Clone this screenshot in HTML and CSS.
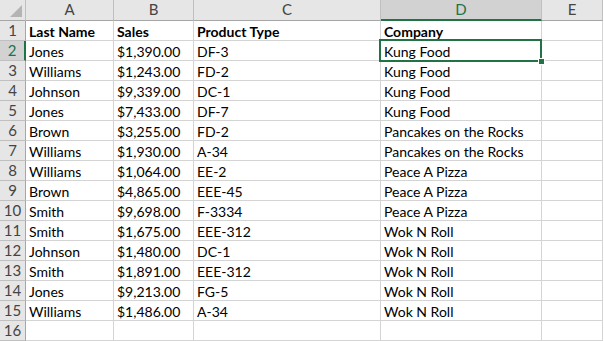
FILE: index.html
```html
<!DOCTYPE html>
<html lang="en">
<head>
    <meta charset="UTF-8">
    <title>Sheet1</title>
    <link rel="stylesheet" href="styles.css">
</head>
<body>
    <div class="sheet">
        <div class="corner"><span class="tri"></span></div>
        <div class="col-head">A</div>
        <div class="col-head">B</div>
        <div class="col-head">C</div>
        <div class="col-head sel">D</div>
        <div class="col-head">E</div>

        <div class="row-head">1</div>
        <div class="cell bold">Last Name</div>
        <div class="cell bold">Sales</div>
        <div class="cell bold">Product Type</div>
        <div class="cell bold">Company</div>
        <div class="cell"></div>

        <div class="row-head sel">2</div>
        <div class="cell">Jones</div>
        <div class="cell">$1,390.00</div>
        <div class="cell">DF-3</div>
        <div class="cell active">Kung Food<span class="handle"></span></div>
        <div class="cell"></div>

        <div class="row-head">3</div>
        <div class="cell">Williams</div>
        <div class="cell">$1,243.00</div>
        <div class="cell">FD-2</div>
        <div class="cell">Kung Food</div>
        <div class="cell"></div>

        <div class="row-head">4</div>
        <div class="cell">Johnson</div>
        <div class="cell">$9,339.00</div>
        <div class="cell">DC-1</div>
        <div class="cell">Kung Food</div>
        <div class="cell"></div>

        <div class="row-head">5</div>
        <div class="cell">Jones</div>
        <div class="cell">$7,433.00</div>
        <div class="cell">DF-7</div>
        <div class="cell">Kung Food</div>
        <div class="cell"></div>

        <div class="row-head">6</div>
        <div class="cell">Brown</div>
        <div class="cell">$3,255.00</div>
        <div class="cell">FD-2</div>
        <div class="cell">Pancakes on the Rocks</div>
        <div class="cell"></div>

        <div class="row-head">7</div>
        <div class="cell">Williams</div>
        <div class="cell">$1,930.00</div>
        <div class="cell">A-34</div>
        <div class="cell">Pancakes on the Rocks</div>
        <div class="cell"></div>

        <div class="row-head">8</div>
        <div class="cell">Williams</div>
        <div class="cell">$1,064.00</div>
        <div class="cell">EE-2</div>
        <div class="cell">Peace A Pizza</div>
        <div class="cell"></div>

        <div class="row-head">9</div>
        <div class="cell">Brown</div>
        <div class="cell">$4,865.00</div>
        <div class="cell">EEE-45</div>
        <div class="cell">Peace A Pizza</div>
        <div class="cell"></div>

        <div class="row-head">10</div>
        <div class="cell">Smith</div>
        <div class="cell">$9,698.00</div>
        <div class="cell">F-3334</div>
        <div class="cell">Peace A Pizza</div>
        <div class="cell"></div>

        <div class="row-head">11</div>
        <div class="cell">Smith</div>
        <div class="cell">$1,675.00</div>
        <div class="cell">EEE-312</div>
        <div class="cell">Wok N Roll</div>
        <div class="cell"></div>

        <div class="row-head">12</div>
        <div class="cell">Johnson</div>
        <div class="cell">$1,480.00</div>
        <div class="cell">DC-1</div>
        <div class="cell">Wok N Roll</div>
        <div class="cell"></div>

        <div class="row-head">13</div>
        <div class="cell">Smith</div>
        <div class="cell">$1,891.00</div>
        <div class="cell">EEE-312</div>
        <div class="cell">Wok N Roll</div>
        <div class="cell"></div>

        <div class="row-head">14</div>
        <div class="cell">Jones</div>
        <div class="cell">$9,213.00</div>
        <div class="cell">FG-5</div>
        <div class="cell">Wok N Roll</div>
        <div class="cell"></div>

        <div class="row-head">15</div>
        <div class="cell">Williams</div>
        <div class="cell">$1,486.00</div>
        <div class="cell">A-34</div>
        <div class="cell">Wok N Roll</div>
        <div class="cell"></div>

        <div class="row-head">16</div>
        <div class="cell"></div>
        <div class="cell"></div>
        <div class="cell"></div>
        <div class="cell"></div>
        <div class="cell"></div>
    </div>
</body>
</html>
```

FILE: styles.css
```css
body {
    margin: 0;
    background-color: #fff;
    font-family: Lato, "Liberation Sans", sans-serif;
    font-size: 14px;
    color: #000;
}

.sheet {
    display: grid;
    grid-template-columns: 26px 88px 80px 187px 161px 61px;
    grid-template-rows: 21px repeat(16, 20px);
    width: 603px;
}

.sheet > div {
    box-sizing: border-box;
    border-right: 1px solid #d4d4d4;
    border-bottom: 1px solid #d4d4d4;
    line-height: 19px;
    padding-top: 1px;
    white-space: nowrap;
    overflow: visible;
}

/* Headers */
.corner {
    position: relative;
    background-color: #e6e6e6;
}

.corner .tri {
    position: absolute;
    right: 3px;
    bottom: 3px;
    width: 0;
    height: 0;
    border-left: 12px solid transparent;
    border-bottom: 12px solid #b4b4b4;
}

.sheet > .corner,
.sheet > .col-head {
    background-color: #e6e6e6;
    border-right-color: #c0c0c0;
    border-bottom-color: #a6a6a6;
    padding-top: 0;
}

.col-head {
    text-align: center;
    color: #444;
    font-size: 15px;
}

.sheet > .row-head {
    background-color: #e6e6e6;
    border-right-color: #a6a6a6;
    border-bottom-color: #c0c0c0;
    text-align: center;
    color: #444;
    font-size: 15px;
    padding-top: 0;
}

.sheet > .col-head.sel {
    background-color: #d2d2d2;
    color: #217346;
    border-bottom: 2px solid #217346;
    line-height: 19px;
}

.sheet > .row-head.sel {
    background-color: #d2d2d2;
    color: #217346;
    border-right: 2px solid #217346;
}

/* Cells */
.cell {
    padding-left: 3px;
}

.bold {
    font-weight: bold;
}

.active {
    position: relative;
}

.active::after {
    content: "";
    position: absolute;
    left: -2px;
    top: -2px;
    right: -1px;
    bottom: -2px;
    border: 2px solid #217346;
}

.handle {
    position: absolute;
    right: -4px;
    bottom: -5px;
    width: 5px;
    height: 5px;
    background-color: #217346;
    border: 1px solid #fff;
    z-index: 2;
}
```
